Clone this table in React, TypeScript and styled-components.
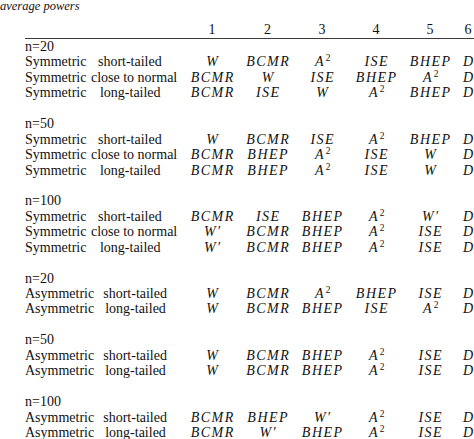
import React from "react";
import styled, { createGlobalStyle } from "styled-components";

const Global = createGlobalStyle`
  html, body { margin: 0; padding: 0; background: #ffffff; }
  body { font-family: "Liberation Serif", "Times New Roman", serif; color: #111; overflow: hidden; }
`;

const COLS = "159px 56px 55px 54px 54px 54px 22px";
const ROW_H = 15.45;

const Page = styled.div`
  width: 474px;
  height: 439px;
  overflow: hidden;
  position: relative;
`;

const Caption = styled.div`
  font-style: italic;
  font-size: 12.5px;
  line-height: 12px;
  height: 12px;
  margin-left: 0px;
  white-space: nowrap;
`;

const Table = styled.div`
  margin-top: 9px;
  padding-left: 25px;
  width: 600px;
`;

const HeaderRow = styled.div`
  display: grid;
  grid-template-columns: ${COLS};
  height: 17px;
  align-items: center;
  font-size: 14px;
  border-bottom: 1px solid #3a3a3a;
  box-sizing: border-box;
  height: 18px;
`;

const HeadCell = styled.div`
  text-align: center;
  line-height: 17px;
`;

const Group = styled.div<{ $first?: boolean }>`
  margin-top: ${(p) => (p.$first ? 0 : ROW_H)}px;
`;

const Row = styled.div`
  display: grid;
  grid-template-columns: ${COLS};
  height: ${ROW_H}px;
  line-height: ${ROW_H}px;
  font-size: 14px;
  white-space: nowrap;
`;

const SizeLabel = styled.div`
  grid-column: 1 / -1;
`;

const Label = styled.div`
  white-space: nowrap;
`;

const Tail = styled.span<{ $indent: number }>`
  margin-left: ${(p) => p.$indent}px;
`;

const MathCell = styled.div`
  text-align: center;
  font-style: italic;
  letter-spacing: 1.5px;
  padding-left: 1.5px;
  overflow: visible;
`;

const Sup = styled.sup`
  font-style: normal;
  font-size: 9.5px;
  letter-spacing: 0;
  vertical-align: 0;
  position: relative;
  top: -5px;
  margin-left: 0.5px;
`;

type Entry = string;

const renderMath = (v: Entry) => {
  if (v === "A2")
    return (
      <>
        A<Sup>2</Sup>
      </>
    );
  if (v === "W'") return <>W′</>;
  return <>{v}</>;
};

type DataRow = { kind: string; kindIndent: number; tail: string; vals: Entry[] };
type DataGroup = { n: string; rows: DataRow[] };

const S = "Symmetric";
const AS = "Asymmetric";

const groups: DataGroup[] = [
  {
    n: "n=20",
    rows: [
      { kind: S, kindIndent: 11.5, tail: "short-tailed", vals: ["W", "BCMR", "A2", "ISE", "BHEP", "D"] },
      { kind: S, kindIndent: 4.5, tail: "close to normal", vals: ["BCMR", "W", "ISE", "BHEP", "A2", "D"] },
      { kind: S, kindIndent: 13.5, tail: "long-tailed", vals: ["BCMR", "ISE", "W", "A2", "BHEP", "D"] },
    ],
  },
  {
    n: "n=50",
    rows: [
      { kind: S, kindIndent: 11.5, tail: "short-tailed", vals: ["W", "BCMR", "ISE", "A2", "BHEP", "D"] },
      { kind: S, kindIndent: 4.5, tail: "close to normal", vals: ["BCMR", "BHEP", "A2", "ISE", "W", "D"] },
      { kind: S, kindIndent: 13.5, tail: "long-tailed", vals: ["BCMR", "BHEP", "A2", "ISE", "W", "D"] },
    ],
  },
  {
    n: "n=100",
    rows: [
      { kind: S, kindIndent: 11.5, tail: "short-tailed", vals: ["BCMR", "ISE", "BHEP", "A2", "W'", "D"] },
      { kind: S, kindIndent: 4.5, tail: "close to normal", vals: ["W'", "BCMR", "BHEP", "A2", "ISE", "D"] },
      { kind: S, kindIndent: 13.5, tail: "long-tailed", vals: ["W'", "BCMR", "BHEP", "A2", "ISE", "D"] },
    ],
  },
  {
    n: "n=20",
    rows: [
      { kind: AS, kindIndent: 9, tail: "short-tailed", vals: ["W", "BCMR", "A2", "BHEP", "ISE", "D"] },
      { kind: AS, kindIndent: 11, tail: "long-tailed", vals: ["W", "BCMR", "BHEP", "ISE", "A2", "D"] },
    ],
  },
  {
    n: "n=50",
    rows: [
      { kind: AS, kindIndent: 9, tail: "short-tailed", vals: ["W", "BCMR", "BHEP", "A2", "ISE", "D"] },
      { kind: AS, kindIndent: 11, tail: "long-tailed", vals: ["W", "BCMR", "BHEP", "A2", "ISE", "D"] },
    ],
  },
  {
    n: "n=100",
    rows: [
      { kind: AS, kindIndent: 9, tail: "short-tailed", vals: ["BCMR", "BHEP", "W'", "A2", "ISE", "D"] },
      { kind: AS, kindIndent: 11, tail: "long-tailed", vals: ["BCMR", "W'", "BHEP", "A2", "ISE", "D"] },
    ],
  },
];

export default function App() {
  return (
    <Page>
      <Global />
      <Caption>average powers</Caption>
      <Table>
        <HeaderRow>
          <HeadCell />
          {[1, 2, 3, 4, 5, 6].map((k) => (
            <HeadCell key={k}>{k}</HeadCell>
          ))}
        </HeaderRow>
        {groups.map((g, gi) => (
          <Group key={gi} $first={gi === 0}>
            <Row>
              <SizeLabel>{g.n}</SizeLabel>
            </Row>
            {g.rows.map((r, ri) => (
              <Row key={ri}>
                <Label>
                  {r.kind}
                  <Tail $indent={r.kindIndent}>{r.tail}</Tail>
                </Label>
                {r.vals.map((v, vi) => (
                  <MathCell key={vi}>{renderMath(v)}</MathCell>
                ))}
              </Row>
            ))}
          </Group>
        ))}
      </Table>
    </Page>
  );
}
